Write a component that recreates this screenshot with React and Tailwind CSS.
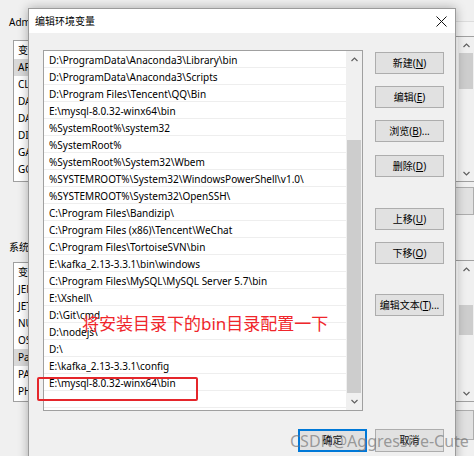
import React from "react";

const paths = [
  "D:\\ProgramData\\Anaconda3\\Library\\bin",
  "D:\\ProgramData\\Anaconda3\\Scripts",
  "D:\\Program Files\\Tencent\\QQ\\Bin",
  "E:\\mysql-8.0.32-winx64\\bin",
  "%SystemRoot%\\system32",
  "%SystemRoot%",
  "%SystemRoot%\\System32\\Wbem",
  "%SYSTEMROOT%\\System32\\WindowsPowerShell\\v1.0\\",
  "%SYSTEMROOT%\\System32\\OpenSSH\\",
  "C:\\Program Files\\Bandizip\\",
  "C:\\Program Files (x86)\\Tencent\\WeChat",
  "C:\\Program Files\\TortoiseSVN\\bin",
  "E:\\kafka_2.13-3.3.1\\bin\\windows",
  "C:\\Program Files\\MySQL\\MySQL Server 5.7\\bin",
  "E:\\Xshell\\",
  "D:\\Git\\cmd",
  "D:\\nodejs\\",
  "D:\\",
  "E:\\kafka_2.13-3.3.1\\config",
  "E:\\mysql-8.0.32-winx64\\bin",
  "",
];

const userVars = ["APPDATA", "CLASSPATH", "DATA_HOME", "DASHBOARD", "DIR_HOME", "GATEWAY", "GOPATH"];
const systemVars = ["JENKINS_HOME", "JETTY_HOME", "NUMBER_OF_PROCESSORS", "OS", "Path", "PATHEXT", "PHP_HOME"];

function Chevron({ down }) {
  return (
    <svg width="7" height="5" viewBox="0 0 7 5">
      <path
        d={down ? "M0.5 1 L3.5 4 L6.5 1" : "M0.5 4 L3.5 1 L6.5 4"}
        fill="none"
        stroke="#606060"
        strokeWidth="1.2"
      />
    </svg>
  );
}

function Button({ label, hint, suffix = "", primary = false, height = "h-[22px]" }) {
  return (
    <div
      className={`flex ${height} w-[69px] items-center justify-center bg-[#e1e1e1] text-[10px] text-black ${
        primary ? "border-2 border-[#0078d7]" : "border border-[#adadad]"
      }`}
    >
      {label}
      {hint ? (
        <>
          (<span className="underline">{hint}</span>)
        </>
      ) : null}
      {suffix}
    </div>
  );
}

function VarBox({ rows, selected, height }) {
  return (
    <div className={`ml-[13px] ${height} w-[200px] border border-[#a0a0a0] bg-white text-[10px]`}>
      <div className="flex h-[18px] items-center pl-[4px]">变量</div>
      {rows.map((row, index) => (
        <div
          key={row}
          className={`flex h-[17px] items-center pl-[4px] ${index === selected ? "bg-[#d9d9d9]" : ""}`}
        >
          {row}
        </div>
      ))}
    </div>
  );
}

function SideList({ height, gapTop, thumb }) {
  return (
    <div className={`flex ${height} justify-end border-y border-[#a0a0a0] bg-white`}>
      <div className="flex w-[16px] flex-col bg-[#f0f0f0]">
        <div className="flex h-[16px] items-center justify-center">
          <Chevron />
        </div>
        <div className={gapTop} />
        <div className={`${thumb} mx-[1px] bg-[#cdcdcd]`} />
        <div className="flex-1" />
        <div className="flex h-[16px] items-center justify-center">
          <Chevron down />
        </div>
      </div>
    </div>
  );
}

export default function App() {
  return (
    <div className="relative h-[456px] w-[474px] overflow-hidden bg-[#f0f0f0] font-['Noto_Sans','Noto_Sans_CJK_SC',sans-serif] text-black">
      {/* background window */}
      <div className="flex h-full">
        <div className="w-[240px]">
          <div className="mt-[15px] flex h-[14px] items-center pl-[9px] text-[10px]">Administrator 的用户变量(U)</div>
          <div className="mt-[11px]">
            <VarBox rows={userVars} selected={0} height="h-[142px]" />
          </div>
          <div className="mt-[58px] flex h-[14px] items-center pl-[9px] text-[10px]">系统变量(S)</div>
          <div className="mt-[8px]">
            <VarBox rows={systemVars} selected={4} height="h-[140px]" />
          </div>
        </div>
        <div className="flex-1" />
        <div className="w-[60px]">
          <div className="h-[22px] border-b border-[#dcdcdc]" />
          <div className="h-[14px] bg-[#f4f4f4]" />
          <SideList height="h-[146px]" gapTop="h-0" thumb="h-[36px]" />
          <div className="mt-[5px] h-[28px] border border-[#adadad] bg-[#e1e1e1]" />
          <div className="h-[45px]" />
          <SideList height="h-[142px]" gapTop="h-[28px]" thumb="h-[30px]" />
          <div className="mt-[8px] h-[30px] border border-[#adadad] bg-[#e1e1e1]" />
        </div>
      </div>

      {/* dialog */}
      <div className="absolute left-[28px] top-[8px] flex h-[460px] w-[428px] flex-col border border-[#9b9b9b] bg-[#f0f0f0] shadow-[0_0_10px_rgba(0,0,0,0.3)]">
        <div className="flex h-[24px] items-center justify-between bg-white pl-[6px] pr-[8px]">
          <span className="text-[10px]">编辑环境变量</span>
          <svg width="11" height="11" viewBox="0 0 11 11">
            <path d="M0.5 0.5 L10.5 10.5 M10.5 0.5 L0.5 10.5" stroke="#111" strokeWidth="1" />
          </svg>
        </div>
        <div className="flex flex-col pl-[14px] pr-[11px] pt-[17px]">
          <div className="flex gap-[12px]">
            <div className="flex h-[361px] w-[320px] border border-[#a0a0a0] bg-white">
              <div className="flex-1">
                {paths.map((path, index) => (
                  <div
                    key={index}
                    className="flex h-[17px] items-center border-b border-[#eeeeee] pl-[5px] pt-[2px] text-[10px] whitespace-nowrap"
                  >
                    {path}
                  </div>
                ))}
              </div>
              <div className="flex w-[16px] flex-col bg-[#f0f0f0]">
                <div className="flex h-[17px] items-center justify-center">
                  <Chevron />
                </div>
                <div className="h-[72px]" />
                <div className="mx-[1px] flex-1 bg-[#cdcdcd]" />
                <div className="flex h-[17px] items-center justify-center">
                  <Chevron down />
                </div>
              </div>
            </div>
            <div className="flex flex-col">
              <div className="mt-[2px]">
                <Button label="新建" hint="N" />
              </div>
              <div className="mt-[12px]">
                <Button label="编辑" hint="E" />
              </div>
              <div className="mt-[12px]">
                <Button label="浏览" hint="B" suffix="..." />
              </div>
              <div className="mt-[13px]">
                <Button label="删除" hint="D" />
              </div>
              <div className="mt-[31px]">
                <Button label="上移" hint="U" />
              </div>
              <div className="mt-[12px]">
                <Button label="下移" hint="O" />
              </div>
              <div className="mt-[30px]">
                <Button label="编辑文本" hint="T" suffix="..." />
              </div>
            </div>
          </div>
          <div className="mt-[18px] flex justify-end gap-[8px]">
            <Button label="确定" primary height="h-[23px]" />
            <Button label="取消" height="h-[23px]" />
          </div>
        </div>
      </div>

      {/* annotation */}
      <div className="absolute left-[37px] top-[377px] h-[24px] w-[161px] rounded-[2px] border-2 border-[#e5262b]" />
      <div className="absolute left-[82px] top-[312px] text-[17px] leading-[24px] whitespace-nowrap text-[#f0262b]">
        将安装目录下的bin目录配置一下
      </div>
      <div className="absolute left-[290px] top-[431px] text-[16px] leading-[20px] whitespace-nowrap text-[rgba(110,110,110,0.65)]">
        CSDN@Aggressive-Cute
      </div>
    </div>
  );
}
